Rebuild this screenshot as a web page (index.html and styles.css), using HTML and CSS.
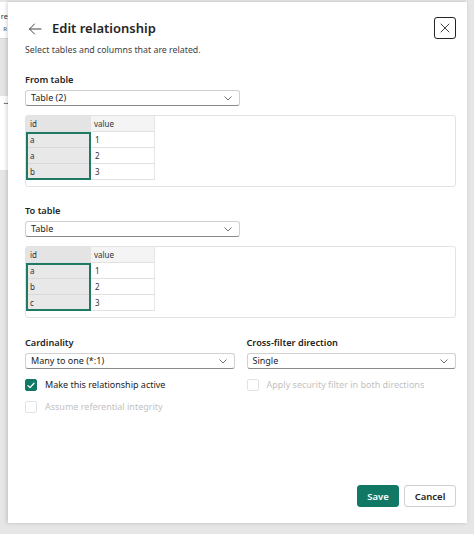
FILE: index.html
```html
<!DOCTYPE html>
<html lang="en">
<head>
<meta charset="utf-8">
<title>Edit relationship</title>
<link rel="stylesheet" href="styles.css">
</head>
<body>
<div class="page">
  <div class="behind">
    <div class="bh-card">
      <div class="bh-t1">re</div>
      <div class="bh-t2">R</div>
      <div class="bh-band"></div>
      <div class="bh-dots">...</div>
    </div>
  </div>

  <div class="dialog">
    <div class="header">
      <div class="title-wrap">
        <svg class="back" width="14" height="12" viewBox="0 0 14 12" aria-hidden="true">
          <path d="M13 6H1.5M6.5 1L1.5 6l5 5" fill="none" stroke="#424242" stroke-width="1" stroke-linecap="round" stroke-linejoin="round"/>
        </svg>
        <h1 class="title">Edit relationship</h1>
      </div>
      <button class="close" aria-label="Close">
        <svg width="10" height="10" viewBox="0 0 10 10" aria-hidden="true">
          <path d="M1 1l8 8M9 1L1 9" fill="none" stroke="#424242" stroke-width="1" stroke-linecap="round"/>
        </svg>
      </button>
    </div>
    <p class="subtitle">Select tables and columns that are related.</p>

    <div class="field-label first">From table</div>
    <div class="dropdown w-table">
      <span>Table (2)</span>
      <svg class="chev" width="8" height="5" viewBox="0 0 8 5" aria-hidden="true"><path d="M0.5 0.5L4 4l3.5-3.5" fill="none" stroke="#616161" stroke-width="0.9"/></svg>
    </div>
    <div class="preview">
      <div class="grid">
        <div class="col col-id">
          <div class="cell head head-id">id</div>
          <div class="sel">
            <div class="cell idc">a</div>
            <div class="cell idc">a</div>
            <div class="cell idc last">b</div>
          </div>
        </div>
        <div class="col col-val">
          <div class="cell head head-val">value</div>
          <div class="cell val">1</div>
          <div class="cell val">2</div>
          <div class="cell val last">3</div>
        </div>
      </div>
    </div>

    <div class="field-label">To table</div>
    <div class="dropdown w-table">
      <span>Table</span>
      <svg class="chev" width="8" height="5" viewBox="0 0 8 5" aria-hidden="true"><path d="M0.5 0.5L4 4l3.5-3.5" fill="none" stroke="#616161" stroke-width="0.9"/></svg>
    </div>
    <div class="preview">
      <div class="grid">
        <div class="col col-id">
          <div class="cell head head-id">id</div>
          <div class="sel">
            <div class="cell idc">a</div>
            <div class="cell idc">b</div>
            <div class="cell idc last">c</div>
          </div>
        </div>
        <div class="col col-val">
          <div class="cell head head-val">value</div>
          <div class="cell val">1</div>
          <div class="cell val">2</div>
          <div class="cell val last">3</div>
        </div>
      </div>
    </div>

    <div class="options">
      <div class="opt-col">
        <div class="field-label opt">Cardinality</div>
        <div class="dropdown">
          <span>Many to one (*:1)</span>
          <svg class="chev" width="8" height="5" viewBox="0 0 8 5" aria-hidden="true"><path d="M0.5 0.5L4 4l3.5-3.5" fill="none" stroke="#616161" stroke-width="0.9"/></svg>
        </div>
        <div class="check-row r1">
          <span class="box checked">
            <svg width="8" height="7" viewBox="0 0 8 7" aria-hidden="true"><path d="M1 3.6l2 2L7 1.2" fill="none" stroke="#fff" stroke-width="1.3" stroke-linecap="round" stroke-linejoin="round"/></svg>
          </span>
          <span class="check-text">Make this relationship active</span>
        </div>
        <div class="check-row r2 disabled">
          <span class="box"></span>
          <span class="check-text">Assume referential integrity</span>
        </div>
      </div>
      <div class="opt-col">
        <div class="field-label opt">Cross-filter direction</div>
        <div class="dropdown">
          <span>Single</span>
          <svg class="chev" width="8" height="5" viewBox="0 0 8 5" aria-hidden="true"><path d="M0.5 0.5L4 4l3.5-3.5" fill="none" stroke="#616161" stroke-width="0.9"/></svg>
        </div>
        <div class="check-row r1 disabled">
          <span class="box"></span>
          <span class="check-text">Apply security filter in both directions</span>
        </div>
      </div>
    </div>

    <div class="spacer"></div>

    <div class="footer">
      <button class="btn primary">Save</button>
      <button class="btn secondary">Cancel</button>
    </div>
  </div>
</div>
</body>
</html>
```

FILE: styles.css
```css
* { box-sizing: border-box; }

html, body {
  margin: 0;
  padding: 0;
}

body {
  width: 474px;
  height: 534px;
  overflow: hidden;
  background: #e6e6e6;
  font-family: "Noto Sans", "Open Sans", sans-serif;
  color: #242424;
}

.page {
  display: flex;
  height: 534px;
  padding-top: 2px;
}

/* page content peeking out behind the panel */
.behind {
  width: 8px;
  flex: none;
  overflow: hidden;
}

.bh-card {
  background: #fff;
  height: 168px;
  display: flex;
  flex-direction: column;
  align-items: flex-end;
}

.bh-t1 {
  font-size: 7.5px;
  line-height: 10px;
  margin-top: 9px;
  color: #333;
}

.bh-t2 {
  font-size: 6px;
  line-height: 8px;
  margin-top: 4px;
  margin-right: 1px;
  color: #555;
}

.bh-band {
  align-self: stretch;
  height: 58px;
  margin-top: 5px;
  background: #e4e4e4;
  border-top: 1px solid #d6d6d6;
}

.bh-dots {
  font-size: 7px;
  font-weight: 700;
  line-height: 10px;
  margin-top: 1px;
  letter-spacing: -0.5px;
  color: #333;
}

/* panel */
.dialog {
  width: 459px;
  height: 521px;
  flex: none;
  background: #fff;
  box-shadow: -1px 0 4px rgba(0, 0, 0, 0.18);
  padding: 15px 11px 16px 17px;
  display: flex;
  flex-direction: column;
}

.header {
  display: flex;
  align-items: center;
  justify-content: space-between;
  height: 22px;
}

.title-wrap {
  display: flex;
  align-items: center;
  padding-left: 3px;
}

.back {
  margin-right: 10px;
  margin-top: 1px;
}

.title {
  margin: 0;
  font-size: 13px;
  font-weight: 600;
  line-height: 18px;
  color: #242424;
}

.close {
  width: 22px;
  height: 22px;
  padding: 0;
  border: 1px solid #242424;
  border-radius: 3px;
  background: #fff;
  display: flex;
  align-items: center;
  justify-content: center;
}

.subtitle {
  margin: 5px 0 0;
  font-size: 8.8px;
  line-height: 12px;
  color: #424242;
}

.field-label {
  font-size: 9.2px;
  font-weight: 600;
  line-height: 12px;
  margin-top: 18px;
  color: #242424;
}

.field-label.opt {
  margin-top: 19px;
}

.dropdown {
  margin-top: 4px;
  height: 16px;
  border: 1px solid #d1d1d1;
  border-bottom-color: #8a8a8a;
  border-radius: 3px;
  display: flex;
  align-items: center;
  justify-content: space-between;
  padding: 0 7px 0 5px;
  font-size: 9px;
  color: #242424;
  background: #fff;
}

.dropdown span {
  line-height: 12px;
}

.w-table {
  width: 215px;
}

.chev {
  flex: none;
}

/* table preview */
.preview {
  margin-top: 9px;
  height: 72px;
  border: 1px solid #e3e3e3;
  border-radius: 3px;
  padding: 0;
}

.grid {
  display: flex;
}

.col {
  display: flex;
  flex-direction: column;
}

.col-id { width: 65px; }
.col-val { width: 64px; }

.cell {
  height: 16px;
  font-size: 8px;
  line-height: 16px;
  padding-left: 4px;
  color: #333;
  border-bottom: 1px solid #e1e1e1;
}

.head-id {
  background: #e4e4e4;
}

.head-val {
  background: #f4f4f4;
  padding-left: 3px;
  border-right: 1px solid #e6e6e6;
}

.sel {
  outline: 2px solid #1e7a63;
  outline-offset: -2px;
}

.idc {
  background: #e8e8e8;
  border-bottom-color: #dadada;
  padding-left: 4px;
}

.val {
  background: #fff;
  border-right: 1px solid #e6e6e6;
  padding-left: 4px;
}

/* options */
.options {
  display: grid;
  grid-template-columns: 1fr 1fr;
  column-gap: 12px;
}

.opt-col {
  display: flex;
  flex-direction: column;
}

.check-row {
  display: flex;
  align-items: center;
  height: 16px;
}

.check-row.r1 { margin-top: 8px; }
.check-row.r2 { margin-top: 6px; }

.box {
  width: 12px;
  height: 12px;
  border: 1px solid #c8c8c8;
  border-radius: 2px;
  margin-right: 8px;
  display: flex;
  align-items: center;
  justify-content: center;
  flex: none;
}

.box.checked {
  background: #117865;
  border-color: #117865;
}

.check-text {
  font-size: 9px;
  line-height: 12px;
  color: #242424;
}

.disabled .box {
  border-color: #e3e3e3;
}

.disabled .check-text {
  color: #c2c2c2;
}

.spacer {
  flex: 1;
}

.footer {
  display: flex;
  justify-content: flex-end;
  gap: 5px;
}

.btn {
  height: 22px;
  border-radius: 3px;
  font-family: "Noto Sans", "Open Sans", sans-serif;
  font-size: 9.5px;
  font-weight: 600;
  padding: 0;
}

.primary {
  width: 42px;
  background: #117865;
  border: 1px solid #117865;
  color: #fff;
}

.secondary {
  width: 52px;
  background: #fff;
  border: 1px solid #d1d1d1;
  color: #242424;
}
```
